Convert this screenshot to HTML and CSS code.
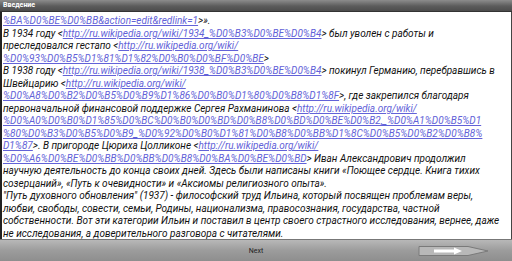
FILE: index.html
```html
<!DOCTYPE html>
<html lang="ru">
<head>
    <meta charset="UTF-8">
    <meta name="viewport" content="width=device-width, initial-scale=1.0">
    <title>Введение</title>
    <link rel="stylesheet" href="styles.css">
</head>
<body>
    <div class="screen">
        <div class="title-bar">Введение</div>

        <div class="content">
            <p class="text">
                <a href="#">%BA%D0%BE%D0%BB&amp;action=edit&amp;redlink=1</a>&gt;».<br>
                В 1934 году &lt;<a href="#">http://ru.wikipedia.org/wiki/1934_%D0%B3%D0%BE%D0%B4</a>&gt; был уволен с работы и<br>
                преследовался гестапо &lt;<a href="#">http://ru.wikipedia.org/wiki/<br>
                %D0%93%D0%B5%D1%81%D1%82%D0%B0%D0%BF%D0%BE</a>&gt;<br>
                В 1938 году &lt;<a href="#">http://ru.wikipedia.org/wiki/1938_%D0%B3%D0%BE%D0%B4</a>&gt; покинул Германию, перебравшись в<br>
                Швейцарию &lt;<a href="#">http://ru.wikipedia.org/wiki/<br>
                %D0%A8%D0%B2%D0%B5%D0%B9%D1%86%D0%B0%D1%80%D0%B8%D1%8F</a>&gt;, где закрепился благодаря<br>
                первоначальной финансовой поддержке Сергея Рахманинова &lt;<a href="#">http://ru.wikipedia.org/wiki/<br>
                %D0%A0%D0%B0%D1%85%D0%BC%D0%B0%D0%BD%D0%B8%D0%BD%D0%BE%D0%B2,_%D0%A1%D0%B5%D1<br>
                %80%D0%B3%D0%B5%D0%B9_%D0%92%D0%B0%D1%81%D0%B8%D0%BB%D1%8C%D0%B5%D0%B2%D0%B8%<br>
                D1%87</a>&gt;. В пригороде Цюриха Цолликоне &lt;<a href="#">http://ru.wikipedia.org/wiki/<br>
                %D0%A6%D0%BE%D0%BB%D0%BB%D0%B8%D0%BA%D0%BE%D0%BD</a>&gt; Иван Александрович продолжил<br>
                научную деятельность до конца своих дней. Здесь были написаны книги «Поющее сердце. Книга тихих<br>
                созерцаний», «Путь к очевидности» и «Аксиомы религиозного опыта».<br>
                "Путь духовного обновления" (1937) - философский труд Ильина, который посвящен проблемам веры,<br>
                любви, свободы, совести, семьи, Родины, национализма, правосознания, государства, частной<br>
                собственности. Вот эти категории Ильин и поставил в центр своего страстного исследования, вернее, даже<br>
                не исследования, а доверительного разговора с читателями.
            </p>
        </div>

        <div class="bottom-bar">
            <span class="next-label">Next</span>
            <button class="next-btn">
                <svg width="72" height="12" viewBox="0 0 72 12">
                    <path d="M1 1.5 H50 L70 6 L50 10.5 H1 Z" fill="#b8b8b8" stroke="#7a7a7a" stroke-width="1"/>
                    <path d="M16 4.5 H36 V2.5 L44 6 L36 9.5 V7.5 H16 Z" fill="#ffffff"/>
                </svg>
            </button>
        </div>
    </div>
</body>
</html>
```

FILE: styles.css
```css
body { margin: 0; background: #000; font-family: Roboto, "Noto Sans", sans-serif; }
.screen { width: 512px; height: 261px; display: flex; flex-direction: column; overflow: hidden; background: #fff; }
.title-bar { height: 11px; line-height: 11px; padding-left: 3px; font-size: 7px; font-weight: bold; color: #fff; background: linear-gradient(#8c8c8c, #5c5c5c 55%, #4c4c4c); border-bottom: 1px solid #333; }
.content { flex: 1; background: #fff; border-left: 2px solid #222; border-right: 1px solid #444; overflow: hidden; }
.text { margin: 0; padding: 3px 0 0 1px; font-size: 10px; line-height: 12.5px; font-style: italic; color: #111; white-space: nowrap; }
.text a { color: #6262d8; text-decoration: underline; }
.bottom-bar { height: 21px; flex-shrink: 0; display: flex; align-items: center; position: relative; justify-content: center; background: linear-gradient(#b8b8b8, #9c9c9c 50%, #8e8e8e); border-top: 1px solid #777; }
.next-label { font-size: 7px; color: #222; }
.next-btn { position: absolute; right: 22px; top: 5px; border: none; padding: 0; background: none; display: flex; }
```
